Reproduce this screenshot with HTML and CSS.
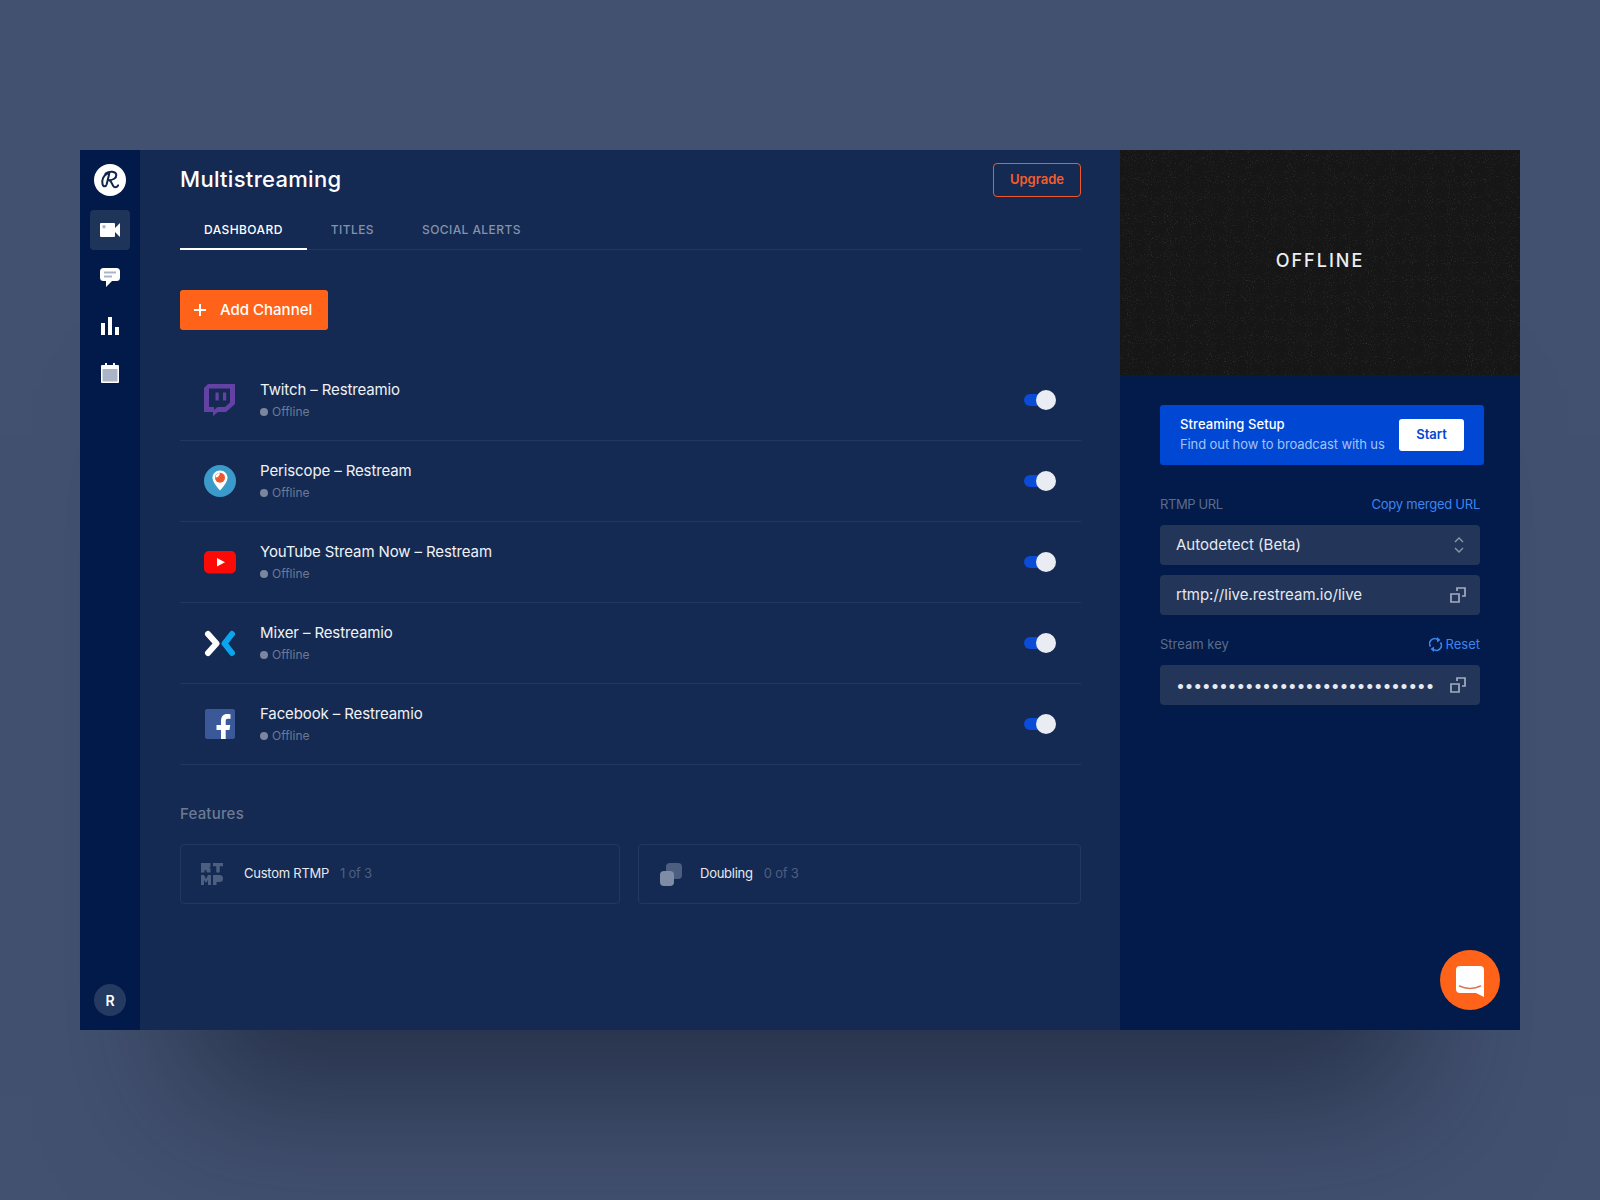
FILE: index.html
```html
<!DOCTYPE html>
<html lang="en">
<head>
<meta charset="utf-8">
<title>Multistreaming</title>
<link rel="stylesheet" href="styles.css">
</head>
<body>
<div class="window">
  <nav class="sidebar">
    <div class="logo">
      <svg width="32" height="32" viewBox="0 0 32 32"><path d="M13.500 9.500C9.500 11 7.500 16 8.500 20c.7 3.200 3.400 3 4.200.2L15.300 9.500M11.500 9.500C15.500 6.700 22 7 22.300 11c.2 3.300-3.500 5-7 5.200 3 .8 2.800 7 5.800 7 1.300 0 2.400-.8 3-1.800" fill="none" stroke="#11264c" stroke-width="2" stroke-linecap="round" stroke-linejoin="round"/></svg>
    </div>
    <div class="nav-item active">
      <svg width="20" height="14" viewBox="0 0 20 14"><path d="M1 0h13a1 1 0 0 1 1 1v12a1 1 0 0 1-1 1H1a1 1 0 0 1-1-1V1a1 1 0 0 1 1-1zM15 5l5-5v14l-5-5z" fill="#fff"/><circle cx="4" cy="3.800" r="1.700" fill="#a9b4c6"/></svg>
    </div>
    <div class="nav-item">
      <svg class="nudge-up" width="20" height="19" viewBox="0 0 20 19"><path d="M3.500 0h13A3.500 3.500 0 0 1 20 3.500v6a3.500 3.500 0 0 1-3.500 3.500H12l-6 6v-6H3.500A3.500 3.500 0 0 1 0 9.500v-6A3.500 3.500 0 0 1 3.500 0z" fill="#fff"/><path d="M4 3.500h12v2H4zM4 7.500h8v2H4z" fill="#a9b4c6"/></svg>
    </div>
    <div class="nav-item">
      <svg width="18" height="18" viewBox="0 0 18 18"><path d="M0 6h4v12H0zM7 0h4v18H7zM14 10h4v8h-4z" fill="#fff"/></svg>
    </div>
    <div class="nav-item">
      <svg class="nudge-up" width="18" height="20" viewBox="0 0 18 20"><path d="M1 2h3V0h2v2h6V0h2v2h3a1 1 0 0 1 1 1v16a1 1 0 0 1-1 1H1a1 1 0 0 1-1-1V3a1 1 0 0 1 1-1z" fill="#fff"/><path d="M1.500 6h15v12.500h-15z" fill="#a9b4c6"/></svg>
    </div>
    <div class="avatar">R</div>
  </nav>

  <main class="main">
    <header class="head">
      <h1 class="title">Multistreaming</h1>
      <button class="upgrade"><span>Upgrade</span></button>
    </header>
    <div class="tabs">
      <span class="tab current">Dashboard</span>
      <span class="tab">Titles</span>
      <span class="tab">Social Alerts</span>
    </div>
    <button class="add">
      <svg width="12" height="12" viewBox="0 0 12 12"><path d="M5 0h2v5h5v2H7v5H5V7H0V5h5z" fill="#fff"/></svg>
      <span>Add Channel</span>
    </button>

    <ul class="channels">
      <li class="channel">
        <div class="ch-icon">
          <svg width="32" height="32" viewBox="0 0 32 32"><path fill-rule="evenodd" d="M4 0h27v20l-9 8h-8l-5 4v-4H0V4zM5 4.500v18.500h5v3l3.500-3H21l5-4.500V4.500z" fill="#6441a5"/><path d="M11.500 8.500h3.200v8h-3.200zM19 8.500h3.200v8H19z" fill="#6441a5"/></svg>
        </div>
        <div class="ch-text"><div class="ch-name">Twitch – Restreamio</div><div class="ch-status"><i class="dot"></i>Offline</div></div>
        <div class="toggle"><span class="track"></span><span class="thumb"></span></div>
      </li>
      <li class="channel">
        <div class="ch-icon">
          <svg width="32" height="32" viewBox="0 0 32 32"><circle cx="16" cy="16" r="16" fill="#3a9bcb"/><path d="M16 5.500c-4.400 0-7.500 3.300-7.500 7.300C8.500 18 16 25.500 16 25.500s7.500-7.500 7.500-12.700c0-4-3.100-7.300-7.500-7.300z" fill="#fff"/><circle cx="16" cy="12.800" r="5" fill="#ea5a2e"/><path d="M11.500 12.500c0-2.800 1.800-4.600 4.300-4.600 0 2.500-1.500 4.500-4.300 4.600z" fill="#fff"/></svg>
        </div>
        <div class="ch-text"><div class="ch-name">Periscope – Restream</div><div class="ch-status"><i class="dot"></i>Offline</div></div>
        <div class="toggle"><span class="track"></span><span class="thumb"></span></div>
      </li>
      <li class="channel">
        <div class="ch-icon">
          <svg width="32" height="32" viewBox="0 0 32 32"><rect x="0" y="5" width="32" height="22.500" rx="5" fill="#fb0a06"/><path d="M13 12l8 4.200-8 4.200z" fill="#fff"/></svg>
        </div>
        <div class="ch-text"><div class="ch-name">YouTube Stream Now – Restream</div><div class="ch-status"><i class="dot"></i>Offline</div></div>
        <div class="toggle"><span class="track"></span><span class="thumb"></span></div>
      </li>
      <li class="channel">
        <div class="ch-icon">
          <svg width="32" height="32" viewBox="0 0 32 32"><path d="M4 7l8.500 9.500L4 26" fill="none" stroke="#fff" stroke-width="6" stroke-linecap="round" stroke-linejoin="round"/><path d="M28 7l-7.500 9.500L28 26" fill="none" stroke="#0ba5ee" stroke-width="6" stroke-linecap="round" stroke-linejoin="round"/></svg>
        </div>
        <div class="ch-text"><div class="ch-name">Mixer – Restreamio</div><div class="ch-status"><i class="dot"></i>Offline</div></div>
        <div class="toggle"><span class="track"></span><span class="thumb"></span></div>
      </li>
      <li class="channel">
        <div class="ch-icon">
          <svg width="32" height="32" viewBox="0 0 32 32"><rect x="1" y="1" width="30" height="30" rx="2" fill="#3b5998"/><path d="M17 31V22h-4.500v-5H17v-4c0-4.500 2.500-7 6-7 1.500 0 3 .1 3.500.2v4.500H24c-1.700 0-2.300.8-2.300 2.300v4h4.500l-.7 5h-3.800v9z" fill="#fff"/></svg>
        </div>
        <div class="ch-text"><div class="ch-name">Facebook – Restreamio</div><div class="ch-status"><i class="dot"></i>Offline</div></div>
        <div class="toggle"><span class="track"></span><span class="thumb"></span></div>
      </li>
    </ul>

    <h2 class="features-title">Features</h2>
    <div class="features">
      <div class="feature">
        <svg class="f-icon" width="22" height="22" viewBox="0 0 22 22"><path d="M0 0h9.500v4l-1.500.8 1.500.8v3.900H6L5 7H3.500v2.500H0zM12 0h10v3.300h-3.300v6.200h-3.400V3.300H12z" fill="#4d5f80"/><path d="M0 12h3l2 4 2-4h3v10H7v-5l-2 3-2-3v5H0zM12 12h6.500a3.500 3.500 0 0 1 0 7h-3v3H12z" fill="#4d5f80"/></svg>
        <span class="f-name">Custom RTMP</span><span class="f-count">1 of 3</span>
      </div>
      <div class="feature">
        <svg class="f-icon doubling" width="24" height="24" viewBox="0 0 24 24"><rect x="7" y="1" width="16" height="16" rx="4" fill="#4d5f80"/><rect x="1" y="9" width="14" height="15" rx="4" fill="#7f8ca6"/></svg>
        <span class="f-name">Doubling</span><span class="f-count">0 of 3</span>
      </div>
    </div>
  </main>

  <aside class="panel">
    <div class="preview">
      <svg class="noise" width="400" height="225">
        <filter id="grain" x="0" y="0" width="100%" height="100%">
          <feTurbulence type="fractalNoise" baseFrequency="0.95" numOctaves="2" seed="4"/>
          <feColorMatrix values="0 0 0 0 1  0 0 0 0 1  0 0 0 0 1  2.600 0 0 0 -1.500"/>
        </filter>
        <rect width="400" height="225" filter="url(#grain)" opacity="0.14"/>
      </svg>
      <span class="offline">OFFLINE</span>
    </div>
    <div class="setup">
      <div class="banner">
        <div class="banner-text"><strong>Streaming Setup</strong><span>Find out how to broadcast with us</span></div>
        <button class="start"><span>Start</span></button>
      </div>
      <div class="label-row first"><span>RTMP URL</span><a class="link">Copy merged URL</a></div>
      <div class="field">
        <span>Autodetect (Beta)</span>
        <svg width="10" height="18" viewBox="0 0 10 18"><path d="M1 6l4-4 4 4M1 12l4 4 4-4" fill="none" stroke="#8d99ae" stroke-width="1.300"/></svg>
      </div>
      <div class="field second">
        <span>rtmp://live.restream.io/live</span>
        <svg class="copy" width="16" height="16" viewBox="0 0 16 16"><path d="M1 7h8v8H1zM7 4V1h8v8h-3" fill="none" stroke="#a2acbf" stroke-width="1.700"/></svg>
      </div>
      <div class="label-row key"><span>Stream key</span>
        <a class="link reset"><svg width="13" height="15" viewBox="0 0 13 15"><path d="M1.500 9.500A5 5 0 0 1 9 3M11.500 5.500A5 5 0 0 1 4 12" fill="none" stroke="#3d84f0" stroke-width="1.600"/><path d="M8 0l3.500 3L8 5.500zM5 15l-3.500-3L5 9.500z" fill="#3d84f0"/></svg>Reset</a>
      </div>
      <div class="field">
        <span class="dots">••••••••••••••••••••••••••••••</span>
        <svg class="copy" width="16" height="16" viewBox="0 0 16 16"><path d="M1 7h8v8H1zM7 4V1h8v8h-3" fill="none" stroke="#a2acbf" stroke-width="1.700"/></svg>
      </div>
    </div>
    <div class="chat">
      <svg width="28" height="32" viewBox="0 0 28 32"><path d="M4 0h20a4 4 0 0 1 4 4v27l-8-4H4a4 4 0 0 1-4-4V4a4 4 0 0 1 4-4z" fill="#fff"/><path d="M3.500 20c6 3.200 15 3.200 21 0" fill="none" stroke="#d9764f" stroke-width="1.500" stroke-linecap="round"/></svg>
    </div>
  </aside>
</div>
</body>
</html>
```
FILE: styles.css
```css
* { box-sizing: border-box; }
html, body { margin: 0; }
body {
  height: 1200px;
  padding-top: 150px;
  background: #425170;
  font-family: Inter, "Noto Sans", sans-serif;
  overflow: hidden;
}
button { font-family: inherit; border: 0; padding: 0; }
button span { display: block; margin-top: -2px; }
h1, h2, ul { margin: 0; padding: 0; }
li { list-style: none; }

.window {
  width: 1440px;
  height: 880px;
  margin: 0 auto;
  display: flex;
  color: #fff;
  box-shadow: 0 175px 130px -110px rgba(15, 22, 40, .55);
}

.sidebar {
  width: 60px;
  background: #021a49;
  display: flex;
  flex-direction: column;
  align-items: center;
  padding: 14px 0;
  gap: 8px;
}
.logo {
  width: 32px;
  height: 32px;
  border-radius: 50%;
  background: #fff;
  margin-bottom: 6px;
}
.logo svg { display: block; }
.nav-item {
  width: 40px;
  height: 40px;
  border-radius: 4px;
  display: flex;
  align-items: center;
  justify-content: center;
}
.nav-item.active { background: #1f3459; }
.nudge-up { margin-top: -2px; }
.avatar {
  margin-top: auto;
  width: 32px;
  height: 32px;
  border-radius: 50%;
  background: #253a60;
  display: flex;
  align-items: center;
  justify-content: center;
  font-size: 14px;
  font-weight: 600;
}

.main {
  width: 980px;
  background: #142a52;
  padding: 13px 39px 0 40px;
}
.head {
  display: flex;
  justify-content: space-between;
  align-items: center;
  height: 34px;
}
.title { font-size: 22px; font-weight: 500; letter-spacing: .3px; margin-top: -2px; }
.upgrade {
  width: 88px;
  height: 34px;
  background: none;
  border: 1px solid #f0582a;
  border-radius: 4px;
  color: #f55d2c;
  font-size: 13px;
  font-weight: 600;
}
.tabs {
  display: flex;
  height: 40px;
  margin-top: 13px;
  border-bottom: 1px solid #24385f;
}
.tab {
  height: 40px;
  padding: 0 24px 2px;
  display: flex;
  align-items: center;
  font-size: 12px;
  font-weight: 500;
  letter-spacing: .42px;
  text-transform: uppercase;
  color: #8592aa;
}
.tab.current {
  color: #fff;
  padding-bottom: 0;
  border-bottom: 2px solid #fff;
}
.add {
  margin-top: 40px;
  width: 148px;
  height: 40px;
  border-radius: 3px;
  background: #ff6319;
  color: #fff;
  font-size: 15px;
  font-weight: 500;
  display: flex;
  align-items: center;
  gap: 14px;
  padding-left: 14px;
}
.channels { margin-top: 30px; }
.channel {
  height: 81px;
  display: flex;
  align-items: center;
  padding: 0 25px 0 24px;
  border-bottom: 1px solid #24385f;
}
.ch-icon { width: 32px; height: 32px; margin-right: 24px; }
.ch-icon svg { display: block; }
.ch-text { flex: 1; padding-top: 1px; }
.ch-name { font-size: 15px; line-height: 20px; color: #f0f2f6; letter-spacing: -.12px; }
.ch-status {
  margin-top: 3px;
  font-size: 12px;
  line-height: 18px;
  color: #6c7a95;
  display: flex;
  align-items: center;
}
.dot {
  width: 8px;
  height: 8px;
  border-radius: 50%;
  background: #7a869d;
  margin-right: 4px;
}
.toggle { position: relative; width: 32px; height: 20px; }
.track {
  position: absolute;
  left: 0;
  top: 4px;
  width: 24px;
  height: 12px;
  border-radius: 6px;
  background: #0a4bd8;
}
.thumb {
  position: absolute;
  right: 0;
  top: 0;
  width: 20px;
  height: 20px;
  border-radius: 50%;
  background: #e9ecf3;
}
.features-title {
  margin-top: 39px;
  font-size: 15px;
  line-height: 20px;
  font-weight: 500;
  letter-spacing: .2px;
  color: #6c7a95;
}
.features {
  display: grid;
  grid-template-columns: 440px 1fr;
  gap: 18px;
  margin-top: 20px;
}
.feature {
  height: 60px;
  border: 1px solid #24385f;
  border-radius: 4px;
  display: flex;
  align-items: center;
  padding-left: 20px;
  font-size: 13px;
}
.f-icon { margin-right: 21px; }
.f-icon.doubling { margin-right: 17px; }
.f-name, .f-count { margin-top: -2px; letter-spacing: -.25px; }
.f-name { color: #e6e9f0; }
.f-count { margin-left: 11px; color: #4d5f80; }

.panel {
  position: relative;
  width: 400px;
  background: #021b4a;
}
.preview {
  position: relative;
  height: 225px;
  background: #161616;
  display: flex;
  align-items: center;
  justify-content: center;
  padding-bottom: 5px;
}
.noise { position: absolute; left: 0; top: 0; }
.offline {
  position: relative;
  font-size: 18px;
  font-weight: 500;
  letter-spacing: 2px;
  color: #eceef2;
}
.setup { padding: 30px 40px 0; }
.banner {
  width: 324px;
  height: 60px;
  border-radius: 3px;
  background: #0047d3;
  display: flex;
  align-items: center;
  justify-content: space-between;
  padding: 0 20px;
}
.banner-text { display: flex; flex-direction: column; gap: 3px; font-size: 13px; line-height: 17px; margin-top: -2px; }
.banner-text strong { font-weight: 500; color: #fff; letter-spacing: .1px; }
.banner-text span { color: #a4c3f6; letter-spacing: -.1px; }
.start {
  width: 65px;
  height: 32px;
  border-radius: 3px;
  background: #fff;
  color: #0047d3;
  font-size: 13px;
  font-weight: 600;
}
.label-row {
  display: flex;
  justify-content: space-between;
  align-items: center;
  height: 20px;
  font-size: 13px;
  color: #5c6c8c;
}
.label-row.first { margin: 29px 0 11px; }
.label-row.first span { letter-spacing: -.4px; }
.label-row.first .link { letter-spacing: -.25px; }
.label-row.key { margin: 19px 0 11px; }
.link { color: #3d84f0; }
.reset { display: flex; align-items: center; gap: 4px; }
.field {
  height: 40px;
  border-radius: 4px;
  background: #233558;
  display: flex;
  align-items: center;
  justify-content: space-between;
  padding: 0 16px;
  font-size: 15px;
  color: #e6e9f0;
}
.field > span { margin-top: -2px; }
.field.second { margin-top: 10px; }
.copy { margin-right: -2px; }
.field > .dots { font-size: 16px; letter-spacing: -.4px; margin: 0; }
.chat {
  position: absolute;
  right: 20px;
  bottom: 20px;
  width: 60px;
  height: 60px;
  border-radius: 50%;
  background: #ff6319;
  display: flex;
  align-items: center;
  justify-content: center;
  padding-top: 3px;
}
```
